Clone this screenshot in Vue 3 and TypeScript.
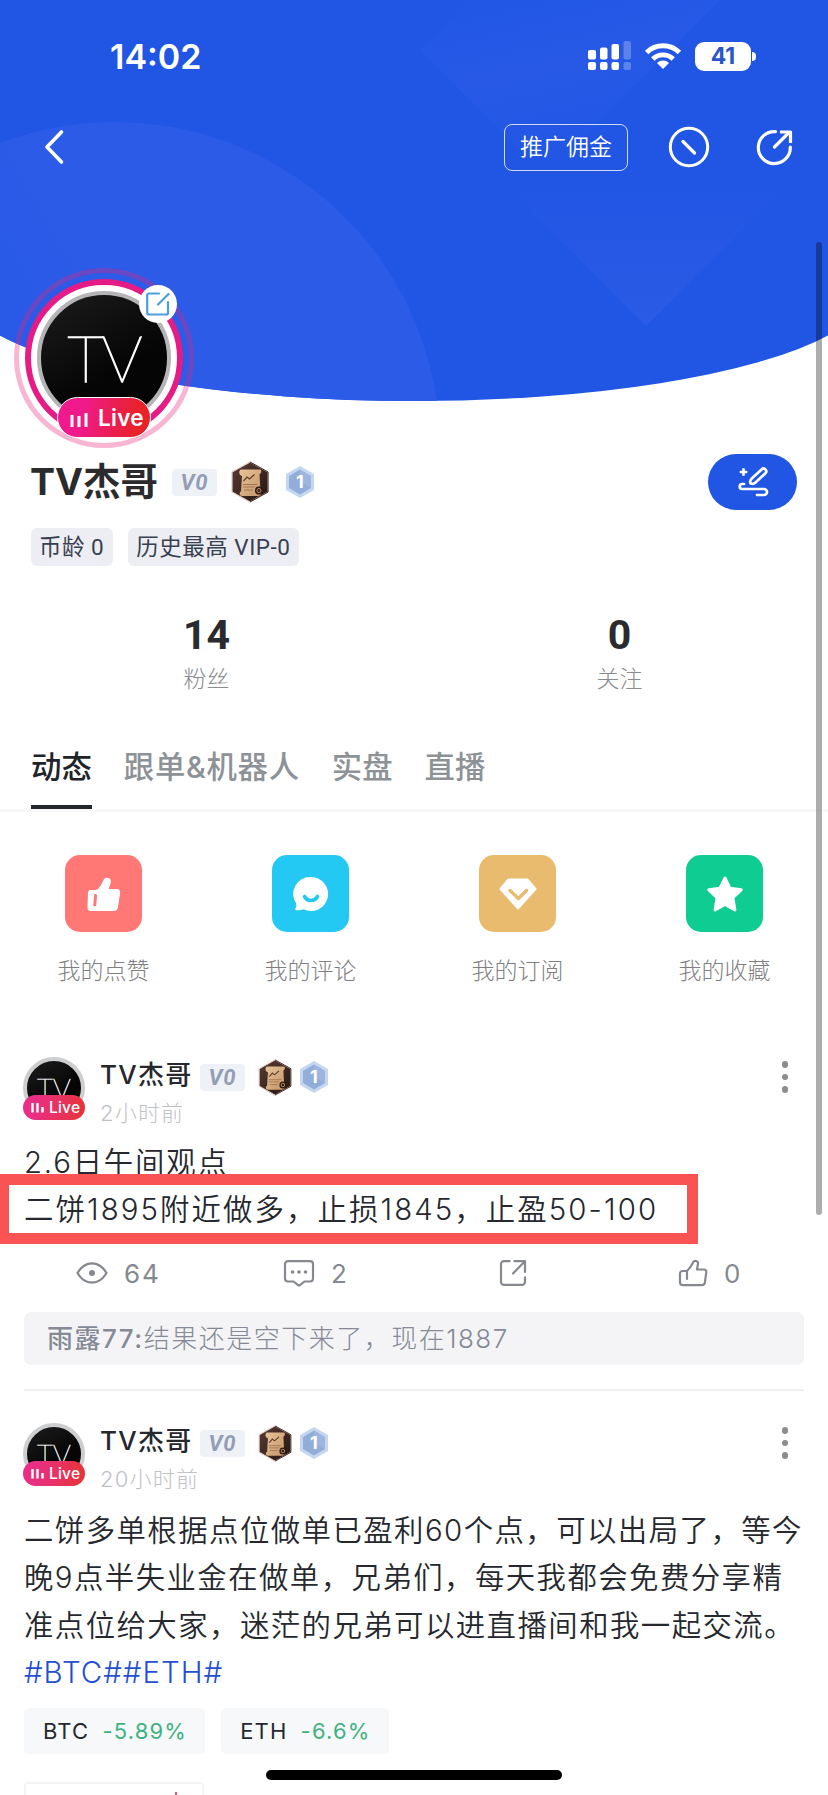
<script setup lang="ts">
interface Shortcut { key: string; label: string }
interface Post { id: number; time: string; lines: string[] }

const tabs: string[] = ['动态', '跟单&机器人', '实盘', '直播']
const shortcuts: Shortcut[] = [
  { key: 'like', label: '我的点赞' },
  { key: 'comment', label: '我的评论' },
  { key: 'subscribe', label: '我的订阅' },
  { key: 'star', label: '我的收藏' },
]
const posts: Post[] = [
  { id: 1, time: '2小时前', lines: ['2.6日午间观点', '二饼1895附近做多，止损1845，止盈50-100'] },
  {
    id: 2,
    time: '20小时前',
    lines: [
      '二饼多单根据点位做单已盈利60个点，可以出局了，等今',
      '晚9点半失业金在做单，兄弟们，每天我都会免费分享精',
      '准点位给大家，迷茫的兄弟可以进直播间和我一起交流。',
    ],
  },
]
const coins = [
  { name: 'BTC', change: '-5.89%' },
  { name: 'ETH', change: '-6.6%' },
]
</script>

<template>
  <div class="screen">
    <svg class="defs" width="0" height="0" aria-hidden="true">
      <defs>
        <linearGradient id="paper" x1="0" y1="0" x2="1" y2="1">
          <stop offset="0" stop-color="#e8c49a" /><stop offset="1" stop-color="#c39468" />
        </linearGradient>
        <linearGradient id="dark" x1="0" y1="0" x2="1" y2="1">
          <stop offset="0" stop-color="#5a3c34" /><stop offset="1" stop-color="#231512" />
        </linearGradient>
        <symbol id="medal" viewBox="0 0 40 42">
          <path d="M20 1 38 11v20L20 41 2 31V11Z" fill="url(#dark)" stroke="#e3cfc6" stroke-width="1.2" />
          <path d="M20 1 38 11v20L20 41" fill="none" stroke="#3a211a" stroke-width="1" />
          <path d="M11 8.500h19c2 0 1.500 4-.5 4.500l1 18c1 3-1 4-3 4H12c-3 0-3-4-1-4.500L12 15c-4-1-3-6-1-6.500Z" fill="url(#paper)" />
          <path d="M13.500 20 17 16l2.500 2 5-4.500" fill="none" stroke="#5d3c28" stroke-width="1.200" />
          <path d="M13 23.500h14M13 26h12M14 29h9" stroke="#a4764f" stroke-width="1" />
          <circle cx="29" cy="29.500" r="4" fill="#2a1812" />
          <circle cx="29" cy="29.500" r="2" fill="none" stroke="#c39468" />
        </symbol>
        <symbol id="level" viewBox="0 0 28 32">
          <path d="M14 0 28 8v16l-14 8L0 24V8Z" fill="#c5d6f1" />
          <path d="M14 3.500 25 10v12l-11 6.500L3 22V10Z" fill="#93add9" />
          <path d="M14 3.500 25 10v12l-11-6Z" fill="#a3bbe2" opacity=".6" />
        </symbol>
      </defs>
    </svg>

    <header class="hero">
      <svg class="hero-bg" width="828" height="402" viewBox="0 0 828 402">
        <defs>
          <clipPath id="heroClip"><path d="M0 0H828V335.400A455 112 0 0 1 0 335.400Z" /></clipPath>
          <linearGradient id="disc" x1=".1" y1=".7" x2=".8" y2=".3">
            <stop offset=".2" stop-color="#2658e7" /><stop offset=".7" stop-color="#2b5be7" />
          </linearGradient>
          <linearGradient id="tip" gradientUnits="userSpaceOnUse" x1="646" y1="326" x2="646" y2="180">
            <stop offset="0" stop-color="#2d5de8" /><stop offset=".4" stop-color="#2859e5" /><stop offset="1" stop-color="#2155e3" />
          </linearGradient>
          <linearGradient id="glow" gradientUnits="userSpaceOnUse" x1="560" y1="170" x2="520" y2="0">
            <stop offset="0" stop-color="#2155e3" /><stop offset=".6" stop-color="#2759e6" /><stop offset="1" stop-color="#2256e4" />
          </linearGradient>
        </defs>
        <g clip-path="url(#heroClip)">
          <rect width="828" height="402" fill="#2155e3" />
          <circle cx="115" cy="447" r="325" fill="url(#disc)" />
          <path d="M420 50 545 175 720 0H470Z" fill="url(#glow)" />
          <path d="M500 180 646 326 792 180Z" fill="url(#tip)" opacity=".8" />
        </g>
      </svg>

      <div class="status">
        <span class="clock">14:02</span>
        <div class="status-icons">
          <svg width="44" height="30" viewBox="0 0 44 30" fill="#fff">
            <rect x="0" y="9" width="8" height="9.500" rx="2" /><rect x="12" y="6.500" width="7.500" height="12" rx="2" />
            <rect x="23.500" y="3" width="7.500" height="15.500" rx="2" /><rect x="35.500" y="0" width="7.500" height="18.500" rx="2" opacity=".25" />
            <rect x="0" y="21" width="8" height="8" rx="2" /><rect x="12" y="21" width="7.500" height="8" rx="2" />
            <rect x="23.500" y="21" width="7.500" height="8" rx="2" /><rect x="35.500" y="21" width="7.500" height="8" rx="2" opacity=".25" />
          </svg>
          <svg class="wifi" width="38" height="28" viewBox="0 0 38 28">
            <path d="M2.600 10.500a23.500 23.500 0 0 1 32.800 0" fill="none" stroke="#fff" stroke-width="5" />
            <path d="M8.800 17a14.600 14.600 0 0 1 20.400 0" fill="none" stroke="#fff" stroke-width="4.800" />
            <path d="m19 27-6-6a8.500 8.500 0 0 1 12 0Z" fill="#fff" />
          </svg>
          <div class="battery">41</div>
          <i class="nub"></i>
        </div>
      </div>

      <nav class="nav">
        <svg width="22" height="36" viewBox="0 0 22 36" fill="none" stroke="#fff" stroke-width="3.600" stroke-linecap="round" stroke-linejoin="round"><path d="M18.500 3 4 18l14.500 15" /></svg>
        <div class="nav-right">
          <button class="promo">推广佣金</button>
          <svg class="nav-a" width="42" height="42" viewBox="0 0 42 42" fill="none" stroke="#fff" stroke-linecap="round"><circle cx="21" cy="21" r="18.700" stroke-width="3" /><path d="m15 15.500 11.500 11.500" stroke-width="3.200" /></svg>
          <svg width="42" height="42" viewBox="0 0 42 42" fill="none" stroke="#fff" stroke-width="3.200"><path d="M22.500 5.600A16 16 0 1 0 37.300 21" stroke-linecap="round" /><path d="M21.500 21 36 6.500" stroke-linecap="round" /><path d="M27 6h10.500v11" stroke-linejoin="round" /></svg>
        </div>
      </nav>

      <div class="avatar-wrap">
        <div class="ring"><div class="avatar"><span>TV</span></div></div>
        <div class="edit">
          <svg width="26" height="26" viewBox="0 0 26 26" fill="none" stroke="#4d9fdc" stroke-width="2.200" stroke-linecap="round"><path d="M14 2.500H4a1.800 1.800 0 0 0-1.800 1.800v17.400A1.800 1.800 0 0 0 4 23.500h17.200a1.800 1.800 0 0 0 1.800-1.800V11" /><path d="M13 13.500 23.500 3" /></svg>
        </div>
        <div class="live"><svg width="18" height="16" viewBox="0 0 18 16" stroke="#fff" stroke-width="3"><path d="M2 3v12M9 4v11M16 1v14" /></svg><b>Live</b></div>
      </div>
    </header>

    <section class="profile">
      <div class="name-row">
        <h1>TV杰哥</h1><span class="v0">V0</span>
        <svg class="medal-l" width="40" height="42"><use href="#medal" /></svg>
        <span class="level"><svg width="28" height="32"><use href="#level" /></svg><b>1</b></span>
        <button class="compose">
          <svg width="34" height="34" viewBox="0 0 34 34" fill="none" stroke="#fff" stroke-width="2.700" stroke-linecap="round" stroke-linejoin="round">
            <path d="M14.500 18.300c-.8-1.600-.2-3.200 1-4.500L25.600 4.400a2.600 2.600 0 0 1 3.800 3.800L19.500 17.500c-1.300 1.200-3.300 1.700-5 .8Z" />
            <path d="M8 19H6.200a2.500 2.500 0 0 0 0 5H28a3 3 0 0 1 0 6h-7" />
            <path d="M7.500 4.300v5.400M4.800 7h5.400" stroke-width="2.600" />
          </svg>
        </button>
      </div>
      <div class="tags"><span class="tag">币龄 0</span><span class="tag">历史最高 VIP-0</span></div>
      <div class="stats">
        <div class="stat"><strong>14</strong><span>粉丝</span></div>
        <div class="stat"><strong>0</strong><span>关注</span></div>
      </div>
    </section>

    <div class="tabs"><span v-for="(tab, i) in tabs" :key="tab" class="tab" :class="{ active: i === 0 }">{{ tab }}</span></div>

    <section class="shortcuts">
      <div v-for="s in shortcuts" :key="s.key" class="shortcut">
        <div class="tile" :class="s.key">
          <svg width="44" height="44" viewBox="0 0 44 44">
            <template v-if="s.key === 'like'">
              <path d="M8.500 18h5.500c3-1 5.500-5.500 7.500-10 1.500-3.500 7-3 7.300.8.200 2.500-1.300 5.700-2.300 8.200h8c2.600 0 4 1.500 3.600 4l-2.200 14.500c-.4 2.300-1.700 3.500-4 3.500H9c-2.300 0-3.700-1.300-3.500-3.500L6 20.500C6.200 19 7 18 8.500 18Z" fill="#fff" />
              <path d="M13.500 23.500 12.800 33" stroke="#ff7875" stroke-width="3" stroke-linecap="round" />
            </template>
            <template v-else-if="s.key === 'comment'">
              <path d="M22 5a17 17 0 1 1-7.500 32.200c-2 .8-5 1.500-7.500 1-.8-.2-1-1-.6-1.600 1-1.400 1.200-3.600.7-5.300A17 17 0 0 1 22 5Z" fill="#fff" />
              <path d="M15.500 24.500c3 5.300 10 5.300 13 0" fill="none" stroke="#23c8f3" stroke-width="3.600" stroke-linecap="round" />
            </template>
            <template v-else-if="s.key === 'subscribe'">
              <path d="M12.500 7.500h19L39.500 17 22 36.500 4.500 17Z" fill="#fff" stroke="#fff" stroke-width="2" stroke-linejoin="round" />
              <path d="m14 18.500 8.500 8 8-8" fill="none" stroke="#e8bb6e" stroke-width="3.400" stroke-linecap="round" stroke-linejoin="round" />
            </template>
            <path v-else d="m22 6 4.900 10.200 11.300 1.600-8.300 7.800 2 12.400L22 32.500l-9.900 5.500 2-12.400L5.800 17.800l11.300-1.600Z" fill="#fff" stroke="#fff" stroke-width="3" stroke-linejoin="round" />
          </svg>
        </div>
        <span>{{ s.label }}</span>
      </div>
    </section>

    <article v-for="post in posts" :key="post.id" class="post" :class="'post-' + post.id">
      <div class="post-head">
        <div class="mini">
          <div class="mini-avatar"><span>TV</span></div>
          <div class="mini-live"><svg width="13" height="11" viewBox="0 0 13 11" stroke="#fff" stroke-width="2.400"><path d="M1.500 1v9.500M6.500 1v9.500M11.500 5v5.500" /></svg><b>Live</b></div>
        </div>
        <div class="who">
          <div class="who-line">
            <b class="who-name">TV杰哥</b><span class="v0">V0</span>
            <svg class="medal-s" width="36" height="37"><use href="#medal" /></svg>
            <span class="level"><svg width="28" height="32"><use href="#level" /></svg><b>1</b></span>
          </div>
          <span class="time">{{ post.time }}</span>
        </div>
        <div class="more"><i></i><i></i><i></i></div>
      </div>
      <div class="body">
        <p v-for="(line, i) in post.lines" :key="line" :class="{ marked: post.id === 1 && i === 1 }">{{ line }}</p>
        <p v-if="post.id === 2" class="hashtags">#BTC##ETH#</p>
      </div>

      <template v-if="post.id === 1">
        <div class="actions">
          <div class="action"><svg width="32" height="28" viewBox="0 0 32 28"><path d="M1.500 14C5 8 10 4.300 16 4.300S27 8 30.500 14C27 20 22 23.700 16 23.700S5 20 1.500 14Z" /><circle cx="16" cy="14" r="3" class="dot" /></svg><span>64</span></div>
          <div class="action"><svg width="32" height="28" viewBox="0 0 32 28"><path d="M5 2.200h22a3 3 0 0 1 3 3v14.300a3 3 0 0 1-3 3h-5.500l-4.600 3.600a1.500 1.500 0 0 1-1.800 0l-4.600-3.600H5a3 3 0 0 1-3-3V5.200a3 3 0 0 1 3-3Z" /><g class="dot"><circle cx="9.500" cy="13" r="1.800" /><circle cx="16" cy="13" r="1.800" /><circle cx="22.500" cy="13" r="1.800" /></g></svg><span>2</span></div>
          <div class="action"><svg width="28" height="28" viewBox="0 0 28 28"><path d="M10.500 2.200H5a3 3 0 0 0-3 3v17.600a3 3 0 0 0 3 3h18a3 3 0 0 0 3-3v-4.500M15.500 2.200H26V13M25.500 2.700 14 14.500" /></svg></div>
          <div class="action"><svg width="30" height="28" viewBox="0 0 30 28"><path d="M9 20V12c3-2.500 4.500-5.500 6-8.500 1.200-2.500 5.500-2 5 1.200l-1 5.800h7c1.600 0 2.500 1.100 2.300 2.600l-1.400 10.300c-.2 1.800-1.200 2.800-3 2.800H5a3 3 0 0 1-3-3V14.500A2.500 2.500 0 0 1 4.500 12H9" /></svg><span>0</span></div>
        </div>
        <div class="reply"><b>雨露77:</b><span>结果还是空下来了，现在1887</span></div>
      </template>
      <template v-else>
        <div class="chips"><div v-for="c in coins" :key="c.name" class="chip"><span>{{ c.name }}</span><em>{{ c.change }}</em></div></div>
        <div class="chart-card"><i></i></div>
      </template>
    </article>

    <div class="scrollbar"></div>
    <div class="home"></div>
  </div>
</template>

<style>
body { margin: 0; background: #fff; }
</style>

<style scoped>
.screen { position: relative; width: 828px; height: 1795px; overflow: hidden; background: #fff; color: #26282e; font-family: Inter, "Noto Sans CJK SC", sans-serif; display: flex; flex-direction: column; }
.screen *, .screen *::after { box-sizing: border-box; }
.defs { position: absolute; }
svg { display: block; flex: none; }
button { border: 0; background: none; padding: 0; font: inherit; color: inherit; }
p, h1 { margin: 0; }
i { display: block; }

.hero { position: relative; height: 440px; flex: none; color: #fff; }
.hero-bg { position: absolute; left: 0; top: 0; }
.status { position: relative; height: 112px; padding: 0 72px 0 110px; display: flex; align-items: center; justify-content: space-between; }
.clock { font-size: 34px; font-weight: 600; line-height: 42px; padding-top: 1px; }
.status-icons { display: flex; align-items: center; }
.wifi { margin-left: 12px; }
.battery { margin-left: 13px; width: 56px; height: 29px; border-radius: 9px; background: #fff; color: #2b55c8; font-size: 23px; font-weight: 700; line-height: 29px; text-align: center; }
.nub { width: 4px; height: 9px; margin-left: 1px; border-radius: 0 4px 4px 0; background: #fff; }
.nav { position: relative; height: 70px; padding: 0 33px 0 43px; display: flex; align-items: center; justify-content: space-between; }
.nav-right { display: flex; align-items: center; }
.promo { width: 124px; height: 47px; border: 1.500px solid rgba(255,255,255,.8); border-radius: 8px; font-size: 23px; line-height: 42px; font-weight: 350; }
.nav-a { margin: 0 43px 0 40px; }

.avatar-wrap { position: absolute; left: 14px; top: 268px; width: 180px; height: 180px; border: 5px solid rgba(236,32,122,.33); border-radius: 50%; }
.ring { position: absolute; left: 6px; top: 6px; width: 158px; height: 158px; border-radius: 50%; border: 6px solid #e61c86; background: #fff; display: flex; align-items: center; justify-content: center; }
.avatar { width: 134px; height: 134px; border-radius: 50%; border: 4px solid #b5b5b8; background: linear-gradient(150deg, #1d1d1d, #050505 60%); display: flex; align-items: center; justify-content: center; }
.avatar span { font: 100 64px/70px Lato, Roboto, sans-serif; letter-spacing: -2px; -webkit-text-stroke: 1.300px #fff; }
.edit { position: absolute; left: 120px; top: 12px; width: 38px; height: 38px; border-radius: 50%; background: #fff; display: flex; align-items: center; justify-content: center; }
.live { position: absolute; left: 38px; top: 124px; width: 94px; height: 41px; border: 1.500px solid #fff; border-radius: 21px; background: linear-gradient(100deg, #f01a8c 25%, #e82229 85%); display: flex; align-items: center; gap: 10px; padding-left: 12px; }
.live svg { margin-top: 5px; }
.live b { font-size: 22.500px; font-weight: 600; letter-spacing: .3px; }

.profile { height: 290px; flex: none; }
.name-row { height: 86px; padding: 0 31px; display: flex; align-items: center; margin-top: -1px; }
h1 { width: 141px; font-size: 37.500px; line-height: 52px; font-weight: 700; color: #2b2b2e; white-space: nowrap; letter-spacing: 0; text-indent: -1px; }
.v0 { width: 45px; height: 27px; border-radius: 4px; background: #eef1f6; color: #949db4; font: italic 700 22px/28px Roboto, sans-serif; letter-spacing: .8px; text-align: center; flex: none; }
.medal-l { margin: 0 16px 0 13px; }
.level { position: relative; width: 28px; height: 32px; flex: none; }
.level b { position: absolute; left: 0; top: 0; width: 28px; line-height: 31px; font-size: 18px; font-weight: 700; color: #fff; text-align: center; }
.compose { margin-left: auto; width: 89px; height: 56px; border-radius: 28px; background: #2155e3; display: flex; align-items: center; justify-content: center; }
.tags { height: 41px; padding: 3px 31px 0; display: flex; gap: 15px; }
.tag { height: 38px; padding: 0 9px 0 8px; border-radius: 6px; background: #eceef4; color: #394050; font: 400 22.500px/39px Roboto, "Noto Sans CJK SC", sans-serif; letter-spacing: .5px; white-space: nowrap; }
.stats { display: flex; height: 164px; padding-top: 44px; }
.stat { width: 413px; display: flex; flex-direction: column; align-items: center; }
.stat strong { font: 700 41px/50px Roboto, sans-serif; color: #2a2b2e; }
.stat span { font-size: 23px; line-height: 34px; margin-top: 2px; color: #8a8b8e; font-weight: 300; }

.tabs { height: 82px; flex: none; padding-left: 31px; display: flex; gap: 32px; border-bottom: 3px solid #f8f8f9; }
.tab { height: 79px; font-size: 30.400px; line-height: 74px; font-weight: 500; color: #8d9297; white-space: nowrap; }
.tab:nth-child(2) { letter-spacing: .7px; }
.tab.active { color: #202328; border-bottom: 4px solid #24272b; }

.shortcuts { height: 225px; flex: none; padding-top: 43px; display: flex; }
.shortcut { flex: 1; display: flex; flex-direction: column; align-items: center; font-size: 23px; font-weight: 300; color: #7f7f82; }
.shortcut span { margin-top: 22px; line-height: 34px; }
.tile { width: 77px; height: 77px; border-radius: 15px; display: flex; align-items: center; justify-content: center; }
.like { background: #ff7875; }
.comment { background: #23c8f3; }
.subscribe { background: #e8bb6e; }
.star { background: #0fcd92; }

.post { flex: none; padding: 0 24px; }
.post-1 { height: 354px; margin-top: 20px; position: relative; }
.post-1::after { content: ""; display: block; height: 2px; margin-top: 24px; background: #f0f0f3; }
.post-2 { margin-top: 12px; }
.post-head { display: flex; height: 84px; }
.mini { position: relative; width: 62px; height: 62px; margin-left: -1px; }
.mini-avatar { width: 62px; height: 62px; border-radius: 50%; border: 4px solid #cdced0; background: linear-gradient(150deg, #1d1d1d, #050505 60%); color: #fff; text-align: center; }
.mini-avatar span { font: 100 28px/54px Lato, Roboto, sans-serif; -webkit-text-stroke: .6px #fff; }
.mini-live { position: absolute; left: 0; top: 38px; width: 62px; height: 25px; border-radius: 13px; background: linear-gradient(100deg, #e92f84 20%, #e6343f 90%); color: #fff; display: flex; align-items: center; gap: 5px; padding-left: 8px; }
.mini-live b { font-size: 15.500px; font-weight: 500; letter-spacing: .2px; }
.who { margin-left: 15px; }
.who-line { display: flex; align-items: center; height: 40px; }
.who-name { width: 100px; font-size: 26px; line-height: 36px; margin-top: -4px; font-weight: 500; letter-spacing: 1.300px; white-space: nowrap; }
.medal-s { margin: 0 7px 0 12px; }
.time { display: block; font-size: 22px; line-height: 33px; font-weight: 300; letter-spacing: 1.200px; color: #c0c2c6; }
.more { margin: 4px 16px 0 auto; display: flex; flex-direction: column; gap: 6px; }
.more i { width: 6.500px; height: 6.500px; border-radius: 50%; background: #8b8d91; }
.body p { font-size: 29.400px; line-height: 47.300px; letter-spacing: 1.450px; font-weight: 350; white-space: nowrap; }
.post-1 .body { margin-top: -2px; }
.post-1 .body p { letter-spacing: 1.800px; }
.post-1 .body .marked { letter-spacing: 2.100px; }
.marked { position: relative; }
.marked::after { content: ""; position: absolute; left: -26px; top: -12px; width: 700px; height: 70px; border: 11px solid #f95353; }
.body .hashtags { color: #2450cf; letter-spacing: 1px; }
.actions { display: grid; grid-template-columns: 207px 216px 179px auto; align-items: center; height: 28px; margin: 24px -24px 0; padding-left: 76px; }
.action { display: flex; align-items: center; gap: 16px; color: #85898f; font-size: 26px; letter-spacing: 1.800px; font-weight: 400; }
.action svg { fill: none; stroke: #85898f; stroke-width: 2.200; stroke-linecap: round; stroke-linejoin: round; }
.action .dot { fill: #85898f; stroke: none; }
.reply { height: 53px; margin-top: 26px; border-radius: 7px; background: #f4f4f7; padding-left: 23px; font-size: 26px; line-height: 53px; letter-spacing: 1.500px; color: #858a95; font-weight: 300; white-space: nowrap; }
.reply b { font-weight: 500; }
.chips { display: flex; gap: 16px; margin-top: 12px; }
.chip { height: 46px; padding: 0 18px 0 19px; border-radius: 5px; background: #f6f8fa; font-size: 22px; line-height: 46px; letter-spacing: 1.200px; display: flex; gap: 13px; }
.chip em { font-style: normal; color: #41b182; }
.chart-card { width: 180px; height: 40px; margin-top: 28px; border: 2px solid #f3f4f5; border-radius: 4px; }
.chart-card i { width: 2px; height: 8px; margin: 8px 0 0 149px; background: #e45a72; }
.scrollbar { position: absolute; left: 816px; top: 242px; width: 6px; height: 973px; border-radius: 3px; background: rgba(0,0,0,.32); }
.home { position: absolute; left: 266px; top: 1770px; width: 296px; height: 10px; border-radius: 5px; background: #000; }
</style>
